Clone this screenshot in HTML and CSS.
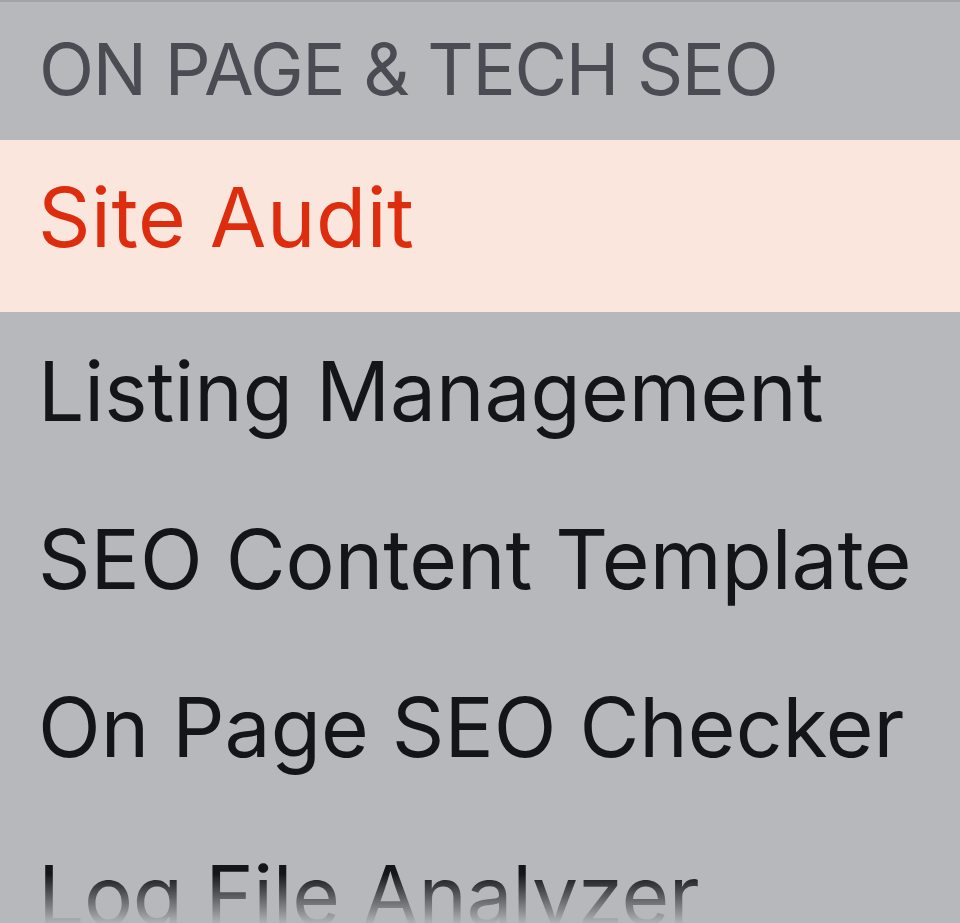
FILE: index.html
```html
<!DOCTYPE html>
<html lang="en">
<head>
<meta charset="utf-8">
<title>On Page &amp; Tech SEO</title>
<link rel="stylesheet" href="styles.css">
</head>
<body>
<nav class="menu">
  <div class="menu-heading">ON PAGE &amp; TECH SEO</div>
  <ul class="menu-list">
    <li class="menu-item is-active">Site Audit</li>
    <li class="menu-item">Listing Management</li>
    <li class="menu-item">SEO Content Template</li>
    <li class="menu-item">On Page SEO Checker</li>
    <li class="menu-item is-fading">Log File Analyzer</li>
  </ul>
</nav>
</body>
</html>
```

FILE: styles.css
```css
html, body {
  margin: 0;
  padding: 0;
  height: 100%;
  overflow: hidden;
  background: #b7b8bc;
}

.menu {
  font-family: Inter, "Noto Sans", sans-serif;
  border-top: 2px solid #a2a3a7;
  background: #b7b8bc;
  height: 921px;
  overflow: hidden;
}

.menu-heading {
  font-size: 72px;
  line-height: 80px;
  padding: 27px 0 31px 39px;
  color: #4b4c53;
  letter-spacing: -1.3px;
}

.menu-list {
  list-style: none;
  margin: 0;
  padding: 0;
}

.menu-item {
  font-size: 82px;
  line-height: 100px;
  padding: 30px 0 38px 38px;
  color: #141519;
  white-space: nowrap;
  letter-spacing: 0;
}

.menu-item.is-active {
  background: #fae6dc;
  color: #de2d0e;
  padding-top: 28px;
  padding-bottom: 44px;
  letter-spacing: 0.5px;
}

.menu-item.is-fading {
  letter-spacing: -0.4px;
  -webkit-mask-image: linear-gradient(to bottom, #000 0, #000 58px, rgba(0,0,0,0.05) 106px);
  mask-image: linear-gradient(to bottom, #000 0, #000 58px, rgba(0,0,0,0.05) 106px);
}
```
